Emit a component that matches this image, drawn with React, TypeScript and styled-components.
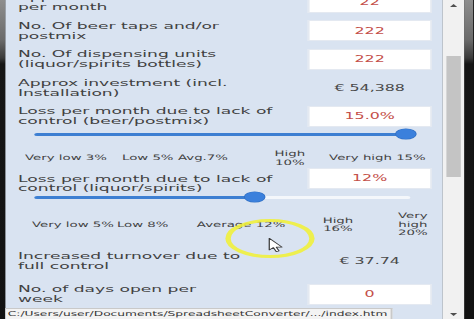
import React from 'react';
import styled, { createGlobalStyle } from 'styled-components';

// the capture is stretched sideways, so the page is built narrow and widened 1.8x
const GlobalStyle = createGlobalStyle`
  html, body {
    margin: 0;
    padding: 0;
    background: #111;
    overflow: hidden;
  }
  body {
    font-family: 'DejaVu Sans', Verdana, sans-serif;
  }
`;

const Screen = styled.div`
  position: relative;
  display: flex;
  width: 263.4px;
  height: 319px;
  overflow: hidden;
  transform: scaleX(1.8);
  transform-origin: 0 0;
`;

const Edge = styled.div<{ $width: number }>`
  flex: none;
  width: ${(p) => p.$width}px;
  background: linear-gradient(
    to bottom,
    #8e8e8e 0,
    #6a6a6a 40px,
    #3a3a3a 58px,
    #161616 64px,
    #121212 100%
  );
`;

const Panel = styled.main`
  flex: 1;
  background: #d9e3f1;
  overflow: hidden;
`;

const Content = styled.div`
  display: flex;
  flex-direction: column;
  margin-top: -9px;
  padding: 0 6.7px;
`;

const Row = styled.div<{ $gap?: number }>`
  flex: none;
  display: flex;
  align-items: center;
  justify-content: space-between;
  height: 22px;
  margin-top: ${(p) => p.$gap ?? 0}px;
`;

const Label = styled.div<{ $drop?: number }>`
  align-self: ${(p) => (p.$drop ? 'flex-start' : 'center')};
  margin-top: ${(p) => p.$drop ?? 0}px;
  font-size: 9.5px;
  line-height: 9.8px;
  color: #414141;
  white-space: nowrap;
`;

const Field = styled.div`
  flex: none;
  display: flex;
  align-items: center;
  justify-content: center;
  width: 68.3px;
  height: 21px;
  box-sizing: border-box;
  background: #fff;
  border: 1px solid #e4e9f1;
  font-size: 8.8px;
  color: #c44f49;
`;

const Amount = styled.div`
  flex: none;
  width: 68.3px;
  text-align: center;
  font-size: 8.8px;
  color: #4a4a4a;
`;

const SliderBox = styled.div<{ $gap: number }>`
  position: relative;
  display: flex;
  align-items: center;
  height: 8px;
  margin: ${(p) => p.$gap}px 12px 0 9.4px;
`;

const Track = styled.div`
  position: relative;
  flex: 1;
  height: 3px;
  border-radius: 2px;
  background: #f4f7fb;
`;

const Fill = styled.div`
  height: 100%;
  border-radius: 2px;
  background: #3d7fd2;
`;

const Thumb = styled.div`
  position: absolute;
  top: 50%;
  width: 11px;
  height: 10px;
  margin: -5px 0 0 -5.5px;
  border-radius: 50%;
  background: #3b80dc;
  box-shadow: 0 0 0 0.5px #3170c4;
`;

const Scale = styled.div<{ $cols: string; $pad: number; $gap: number; $h: number }>`
  display: grid;
  grid-template-columns: ${(p) => p.$cols};
  align-items: center;
  height: ${(p) => p.$h}px;
  margin-top: ${(p) => p.$gap}px;
  padding: 0 3px 0 ${(p) => p.$pad}px;
  font-size: 7.4px;
  line-height: 8.5px;
  color: #414141;
  white-space: nowrap;
`;

const Tick = styled.span<{ $align?: 'left' | 'center' | 'right' }>`
  text-align: ${(p) => p.$align ?? 'left'};
`;

const Scrollbar = styled.div`
  flex: none;
  display: flex;
  flex-direction: column;
  align-items: flex-start;
  width: 12.2px;
  background: #f1f1f1;
`;

const ArrowBox = styled.div`
  display: flex;
  align-items: center;
  justify-content: center;
  align-self: stretch;
  height: 10px;
`;

const ScrollThumb = styled.div`
  margin: 46px 0 0 1.7px;
  width: 8.3px;
  height: 121px;
  background: #c4c4c4;
`;

const Spacer = styled.div`
  flex: 1;
`;

const StatusBar = styled.div`
  position: absolute;
  left: 3.3px;
  bottom: 0;
  width: 214.4px;
  height: 11px;
  box-sizing: border-box;
  padding-left: 1px;
  background: #f3f3f3;
  border-top: 1px solid #c9c9c9;
  border-right: 1px solid #c9c9c9;
  font-size: 6.8px;
  line-height: 10px;
  color: #333;
  white-space: nowrap;
`;

const Overlay = styled.svg`
  position: absolute;
  left: 0;
  top: 0;
  pointer-events: none;
`;

function Slider({ pct, gap }: { pct: number; gap: number }) {
  return (
    <SliderBox $gap={gap}>
      <Track>
        <Fill style={{ width: `${pct}%` }} />
        <Thumb style={{ left: `${pct}%` }} />
      </Track>
    </SliderBox>
  );
}

function Arrow({ up }: { up?: boolean }) {
  return (
    <ArrowBox>
      <svg width="4" height="3" viewBox="0 0 4 3">
        <path d={up ? 'M0 3 L2 0 L4 3 Z' : 'M0 0 L2 3 L4 0 Z'} fill="#505050" />
      </svg>
    </ArrowBox>
  );
}

export default function App() {
  return (
    <>
      <GlobalStyle />
      <Screen>
        <Edge $width={3.3} />
        <Panel>
          <Content>
            <Row>
              <Label>
                Approx no. of drinks sold
                <br />
                per month
              </Label>
              <Field>22</Field>
            </Row>
            <Row $gap={6.5}>
              <Label>
                No. Of beer taps and/or
                <br />
                postmix
              </Label>
              <Field>222</Field>
            </Row>
            <Row $gap={6.5}>
              <Label>
                No. Of dispensing units
                <br />
                (liquor/spirits bottles)
              </Label>
              <Field>222</Field>
            </Row>
            <Row $gap={6.5}>
              <Label>
                Approx investment (incl.
                <br />
                Installation)
              </Label>
              <Amount>€ 54,388</Amount>
            </Row>
            <Row $gap={6.5}>
              <Label>
                Loss per month due to lack of
                <br />
                control (beer/postmix)
              </Label>
              <Field>15.0%</Field>
            </Row>
            <Slider pct={98.8} gap={3} />
            <Scale $cols="53.9px 31.1px 45.2px 34px 1fr" $pad={3.9} $gap={12} $h={17}>
              <Tick>Very low 3%</Tick>
              <Tick>Low 5%</Tick>
              <Tick>Avg.7%</Tick>
              <Tick $align="center">
                High
                <br />
                10%
              </Tick>
              <Tick $align="right">Very high 15%</Tick>
            </Scale>
            <Row>
              <Label $drop={6.7}>
                Loss per month due to lack of
                <br />
                control (liquor/spirits)
              </Label>
              <Field>12%</Field>
            </Row>
            <Slider pct={58.5} gap={4} />
            <Scale $cols="47.2px 44.4px 61.4px 34px 49.2px" $pad={7.8} $gap={11.25} $h={25.5}>
              <Tick>Very low 5%</Tick>
              <Tick>Low 8%</Tick>
              <Tick>Average 12%</Tick>
              <Tick $align="center">
                High
                <br />
                16%
              </Tick>
              <Tick $align="center">
                Very
                <br />
                high
                <br />
                20%
              </Tick>
            </Scale>
            <Row $gap={12.5}>
              <Label>
                Increased turnover due to
                <br />
                full control
              </Label>
              <Amount>€ 37.74</Amount>
            </Row>
            <Row $gap={11}>
              <Label>
                No. of days open per
                <br />
                week
              </Label>
              <Field>0</Field>
            </Row>
          </Content>
        </Panel>
        <Scrollbar>
          <Arrow up />
          <ScrollThumb />
          <Spacer />
          <Arrow />
        </Scrollbar>
        <Edge $width={5} />
        <StatusBar>C:/Users/user/Documents/SpreadsheetConverter/.../index.htm</StatusBar>
        <Overlay width="263.4" height="319" viewBox="0 0 263.4 319">
          <ellipse cx="150" cy="238.5" rx="23.3" ry="18" fill="none" stroke="#eff03c" strokeWidth="3" opacity="0.9" />
          <path
            d="M149.6 238.3 L149.6 250 L151.9 247.6 L153.5 251.6 L155 251 L153.5 247.1 L156.7 247.1 Z"
            fill="#fff"
            stroke="#3a3a3a"
            strokeWidth="0.7"
            strokeLinejoin="round"
          />
        </Overlay>
      </Screen>
    </>
  );
}
